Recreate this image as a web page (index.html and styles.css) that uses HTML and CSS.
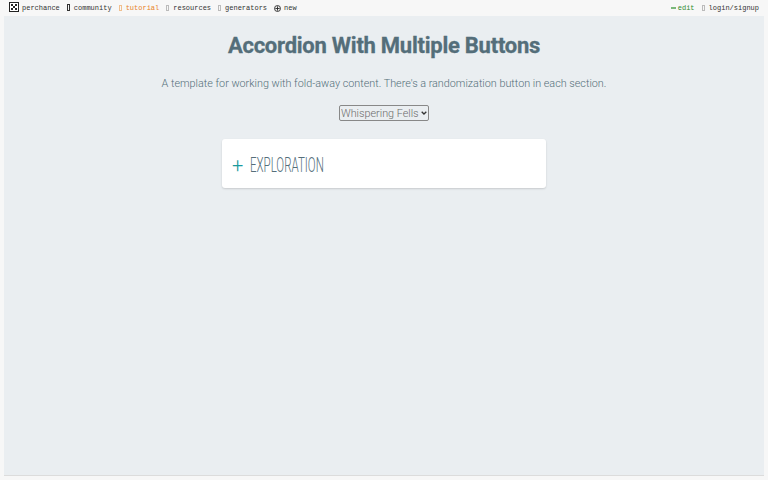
FILE: index.html
```html
<!DOCTYPE html>
<html lang="en">

<head>
    <meta charset="UTF-8">
    <meta name="viewport" content="width=device-width, initial-scale=1.0">
    <title>Accordion With Multiple Buttons</title>
    <link rel="stylesheet" href="styles.css">
</head>

<body>

    <!-- Top bar -->
    <nav class="topbar">
        <div class="nav-group">
            <a class="nav-link nav-home">
                <svg class="dice" width="10" height="10" viewBox="0 0 10 10">
                    <rect x="0.5" y="0.5" width="9" height="9" fill="#fff" stroke="#222" stroke-width="1" />
                    <rect x="2" y="2" width="2" height="2" fill="#222" />
                    <rect x="6" y="2" width="2" height="2" fill="#222" />
                    <rect x="4" y="4" width="2" height="2" fill="#222" />
                    <rect x="2" y="6" width="2" height="2" fill="#222" />
                    <rect x="6" y="6" width="2" height="2" fill="#222" />
                </svg>
                perchance
            </a>
            <a class="nav-link"><span class="tofu tofu-dark"></span>community</a>
            <a class="nav-link nav-tutorial"><span class="tofu tofu-orange"></span>tutorial</a>
            <a class="nav-link"><span class="tofu"></span>resources</a>
            <a class="nav-link"><span class="tofu"></span>generators</a>
            <a class="nav-link">
                <svg class="globe" width="7" height="7" viewBox="0 0 8 8">
                    <circle cx="4" cy="4" r="3.4" fill="none" stroke="#222" stroke-width="1" />
                    <path d="M4 1.5V6.5M1.5 4H6.5" stroke="#222" stroke-width="1" />
                </svg>
                new
            </a>
        </div>
        <div class="nav-group nav-right">
            <a class="nav-link nav-edit"><span class="pencil"></span>edit</a>
            <a class="nav-link"><span class="tofu"></span>login/signup</a>
        </div>
    </nav>

    <!-- Generator frame -->
    <main class="frame">
        <h1>Accordion With Multiple Buttons</h1>
        <p class="intro">A template for working with fold-away content. There's a randomization button in each section.</p>

        <div class="select-wrap">
            <select class="theme-select">
                <option>Whispering Fells</option>
            </select>
            <svg class="select-arrow" width="6" height="4" viewBox="0 0 6 4">
                <path d="M0.7 0.7L3 3L5.3 0.7" fill="none" stroke="#333" stroke-width="1.3" />
            </svg>
        </div>

        <section class="accordion">
            <span class="plus">+</span>
            <h2>EXPLORATION</h2>
        </section>
    </main>

</body>

</html>
```

FILE: styles.css
```css
html,
body {
    height: 100%;
}

body {
    font-family: Roboto, sans-serif;
    margin: 0;
    padding: 0;
    background-color: #f7f7f7;
    display: flex;
    flex-direction: column;
    overflow: hidden;
}

.topbar {
    height: 16px;
    padding: 0 9px 0 9px;
    display: flex;
    justify-content: space-between;
    align-items: center;
    font-family: "Liberation Mono", monospace;
    font-size: 7px;
    color: #333;
    flex-shrink: 0;
}

.nav-group {
    display: flex;
    align-items: center;
    gap: 7px;
}

.nav-link {
    display: flex;
    align-items: center;
    white-space: nowrap;
}

.nav-home {
    gap: 3px;
}

.nav-tutorial {
    color: #e8842c;
}

.nav-edit {
    color: #2e8b2e;
}

.dice {
    display: block;
    margin-top: -2px;
}

.globe {
    display: block;
    margin-right: 3px;
}

.tofu {
    width: 1px;
    height: 4px;
    margin-right: 4px;
    border: 1px solid #bbb;
    box-sizing: content-box;
}

.tofu-dark {
    height: 5px;
    margin-top: -2px;
    border-color: #333;
}

.tofu-orange {
    border-color: #f0c090;
}

.pencil {
    width: 5px;
    height: 2px;
    margin-right: 2px;
    background-color: #7ab87a;
}

.frame {
    flex: 1;
    margin: 0 4px 4px 4px;
    background-color: #eaeef1;
    border-bottom: 1px solid #dcdcdc;
    display: flex;
    flex-direction: column;
    align-items: center;
}

h1 {
    margin: 16px 0 0 0;
    font-size: 22px;
    line-height: 27px;
    font-weight: 700;
    color: #546e7a;
    letter-spacing: -0.25px;
    -webkit-text-stroke: 0.3px #546e7a;
}

.intro {
    margin: 17px 0 0 0;
    font-size: 10.8px;
    line-height: 16px;
    font-weight: 300;
    color: #546e7a;
}

.select-wrap {
    margin-top: 13px;
    position: relative;
    height: 16px;
}

.theme-select {
    display: block;
    width: 90px;
    height: 16px;
    padding: 0 0 0 1px;
    appearance: none;
    font-family: Roboto, sans-serif;
    font-size: 10.8px;
    font-weight: 300;
    color: #6b6b6b;
    background-color: #eaeef1;
    border: 1px solid #888;
    border-radius: 2px;
}

.select-arrow {
    position: absolute;
    right: 2px;
    top: 6px;
    pointer-events: none;
}

.accordion {
    margin-top: 18px;
    width: 324px;
    height: 49px;
    padding: 2px 10px 0 10px;
    box-sizing: border-box;
    display: flex;
    align-items: center;
    background-color: #fff;
    border-radius: 3px;
    box-shadow: 0 1px 2px rgba(0, 0, 0, 0.15);
}

.plus {
    font-size: 20px;
    font-weight: 300;
    color: #1a9a9e;
    width: 18px;
    flex-shrink: 0;
}

h2 {
    margin: 0;
    font-size: 20px;
    font-weight: 300;
    color: #546e7a;
    transform: scaleX(0.575);
    transform-origin: left center;
}
```
